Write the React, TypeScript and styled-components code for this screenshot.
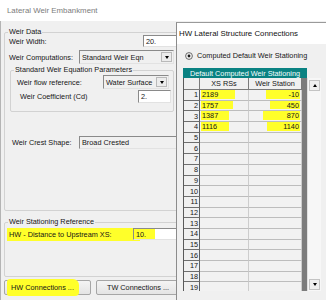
import React from "react";
import styled, { createGlobalStyle } from "styled-components";

const GlobalStyle = createGlobalStyle`
  html, body { margin: 0; padding: 0; background: #ffffff; }
  body { font-family: "Liberation Sans", Arial, sans-serif; }
`;

const Screen = styled.div`
  position: relative;
  width: 326px;
  height: 300px;
  overflow: hidden;
  background: #ffffff;
  font-size: 7.3px;
  color: #161616;
`;

const TopStrip = styled.div`
  position: absolute;
  left: 186px;
  top: 0;
  width: 140px;
  height: 1px;
  background: linear-gradient(90deg, #4a4a4a 0 8px, #2fa84a 8px 10px, #4a4a4a 10px 76px, #c020c0 76px 78px, #4a4a4a 78px);
`;

const Window = styled.div<{ $left: number; $top: number; $width: number; $front?: boolean }>`
  position: absolute;
  left: ${p => p.$left}px;
  top: ${p => p.$top}px;
  width: ${p => p.$width}px;
  bottom: 0;
  display: flex;
  flex-direction: column;
  background: #f0f0f0;
  z-index: ${p => (p.$front ? 2 : 1)};
  ${p => p.$front && `border-left: 1px solid #8c8c8c; border-top: 1px solid #9a9a9a;`}
`;

const TitleBar = styled.div<{ $active?: boolean; $indent: number }>`
  height: 21px;
  flex-shrink: 0;
  display: flex;
  align-items: center;
  padding-left: ${p => p.$indent}px;
  background: #ffffff;
  font-size: 7.85px;
  color: ${p => (p.$active ? "#111111" : "#7c7c7c")};
`;

const Client = styled.div<{ $pad: string }>`
  flex: 1;
  display: flex;
  flex-direction: column;
  padding: ${p => p.$pad};
`;

const LeftClient = styled(Client)`
  border-left: 1px solid #b4b4b4;
`;

const Group = styled.div<{ $h: number; $w: number; $ml?: number; $mt?: number }>`
  position: relative;
  box-sizing: border-box;
  height: ${p => p.$h}px;
  width: ${p => p.$w}px;
  margin-left: ${p => p.$ml ?? 0}px;
  margin-top: ${p => p.$mt ?? 0}px;
  border: 1px solid #d2d2d2;
  border-radius: 2px;
  display: flex;
  flex-direction: column;
  flex-shrink: 0;
`;

const Legend = styled.span`
  position: absolute;
  top: -6px;
  left: 3px;
  padding: 0 1px;
  line-height: 10px;
  background: #f0f0f0;
`;

const Row = styled.div<{ $h: number; $indent: number; $mt?: number }>`
  display: flex;
  align-items: center;
  height: ${p => p.$h}px;
  padding-left: ${p => p.$indent}px;
  margin-top: ${p => p.$mt ?? 0}px;
  flex-shrink: 0;
`;

const Label = styled.span<{ $w: number }>`
  width: ${p => p.$w}px;
  flex-shrink: 0;
  white-space: nowrap;
`;

const Mark = styled.span`
  background: #ffff2a;
`;

const MarkLabel = styled(Label)`
  display: flex;
  align-items: center;
  align-self: stretch;
`;

const Sunken = styled.div<{ $w: number; $white?: boolean }>`
  box-sizing: border-box;
  width: ${p => p.$w}px;
  height: 100%;
  flex-shrink: 0;
  display: flex;
  align-items: center;
  padding-left: 2px;
  background: ${p => (p.$white ? "#ffffff" : "#f0f0f0")};
  border: 1px solid;
  border-color: #8a8a8a #e2e2e2 #e2e2e2 #8a8a8a;
  white-space: nowrap;
`;

const BoxText = styled.span`
  flex: 1;
`;

const InputMark = styled.span<{ $w: number }>`
  align-self: stretch;
  display: flex;
  align-items: center;
  width: ${p => p.$w}px;
  margin-left: -2px;
  padding-left: 2px;
  background: #ffff2a;
`;

const DropButton = styled.span`
  box-sizing: border-box;
  width: 11px;
  height: 10px;
  margin-right: 1px;
  display: flex;
  align-items: center;
  justify-content: center;
  background: #ececec;
  border: 1px solid #b9b9b9;
  &::after {
    content: "";
    border-left: 2.5px solid transparent;
    border-right: 2.5px solid transparent;
    border-top: 3px solid #000;
  }
`;

const ButtonRow = styled.div`
  display: flex;
  gap: 5px;
  margin-top: 3px;
  height: 15px;
`;

const PushButton = styled.div<{ $w: number }>`
  box-sizing: border-box;
  width: ${p => p.$w}px;
  height: 15px;
  display: flex;
  align-items: center;
  justify-content: center;
  border: 1px solid #a6a6a6;
  border-radius: 2px;
  background: linear-gradient(#f4f4f4, #e4e4e4);
  white-space: nowrap;
`;

const ButtonMark = styled.span`
  display: flex;
  align-items: center;
  justify-content: center;
  width: 72px;
  height: 17px;
  margin-left: -10px;
  background: #ffff2a;
  border-radius: 3px 6px 4px 2px;
`;

const RadioRow = styled.div`
  display: flex;
  align-items: center;
  gap: 4px;
  height: 11px;
  margin-top: 6px;
  padding-left: 2px;
`;

const GridFrame = styled.div`
  display: flex;
  width: 138px;
  height: 223px;
  margin-top: 7px;
`;

const GridMain = styled.div`
  width: 124px;
  display: flex;
  flex-direction: column;
`;

const Caption = styled.div`
  height: 10px;
  flex-shrink: 0;
  display: flex;
  align-items: center;
  justify-content: center;
  background: #0a8282;
  color: #f4ffff;
  white-space: nowrap;
`;

const GridBody = styled.div`
  flex: 1;
  overflow: hidden;
  background: #7c7c7c;
  border-left: 1px solid #5a5a5a;
`;

const Table = styled.div`
  display: grid;
  width: 118px;
  grid-template-columns: 16px 49px 53px;
  grid-template-rows: 12px;
  grid-auto-rows: 10.7px;
  background: #f2f2f2;
`;

const HeadCell = styled.div`
  box-sizing: border-box;
  display: flex;
  align-items: center;
  justify-content: center;
  background: #f0f0f0;
  border-right: 1px solid #7a7a7a;
  border-bottom: 1px solid #7a7a7a;
  white-space: nowrap;
`;

const RowHead = styled.div`
  box-sizing: border-box;
  display: flex;
  align-items: center;
  justify-content: flex-end;
  padding-right: 1px;
  background: #f0f0f0;
  border-right: 1px solid #5e5e5e;
  border-bottom: 1px solid #6e6e6e;
`;

const Cell = styled.div<{ $right?: boolean }>`
  box-sizing: border-box;
  display: flex;
  align-items: stretch;
  justify-content: ${p => (p.$right ? "flex-end" : "flex-start")};
  padding: 0 1px 1px 1px;
  border-right: 1px solid #cdcdcd;
  border-bottom: 1px solid #bdbdbd;
`;

const CellMark = styled.span<{ $w: number; $right?: boolean }>`
  display: flex;
  align-items: center;
  justify-content: ${p => (p.$right ? "flex-end" : "flex-start")};
  width: ${p => p.$w}px;
  padding: 0 1px;
  background: #ffff2a;
`;

const ScrollBar = styled.div`
  width: 14px;
  display: flex;
  flex-direction: column;
  padding-top: 10px;
`;

const Track = styled.div`
  flex: 1;
  display: flex;
  flex-direction: column;
  justify-content: space-between;
  background: #f7f7f7;
  border-left: 1px solid #e0e0e0;
  padding: 2px 1px 1px 1px;
`;

const ArrowButton = styled.div<{ $up?: boolean }>`
  box-sizing: border-box;
  height: 11px;
  display: flex;
  align-items: center;
  justify-content: center;
  background: #f0f0f0;
  border: 1px solid #c4c4c4;
  &::after {
    content: "";
    border-left: 2.5px solid transparent;
    border-right: 2.5px solid transparent;
    ${p => (p.$up ? "border-bottom: 3px solid #000;" : "border-top: 3px solid #000;")}
  }
`;

const stations = [
  { xs: "2189", st: "-10", xw: 32, sw: 32 },
  { xs: "1757", st: "450", xw: 30, sw: 28 },
  { xs: "1387", st: "870", xw: 26, sw: 35 },
  { xs: "1116", st: "1140", xw: 26, sw: 31 },
];

function RadioDot() {
  return (
    <svg width="8" height="8" viewBox="0 0 8 8">
      <circle cx="4" cy="4" r="3.4" fill="#f4f4f4" stroke="#5a5a5a" strokeWidth="0.9" />
      <circle cx="4" cy="4" r="1.4" fill="#1a1a1a" />
    </svg>
  );
}

function Combo({ w, text }: { w: number; text: string }) {
  return (
    <Sunken $w={w}>
      <BoxText>{text}</BoxText>
      <DropButton />
    </Sunken>
  );
}

function LateralWeirDialog() {
  return (
    <Window $left={0} $top={0} $width={330}>
      <TitleBar $indent={7}>Lateral Weir Embankment</TitleBar>
      <LeftClient $pad="11px 0 0 3px">
        <Group $h={179} $w={260}>
          <Legend>Weir Data</Legend>
          <Row $h={12} $indent={4} $mt={2}>
            <Label $w={134}>Weir Width:</Label>
            <Sunken $w={42} $white>20.</Sunken>
          </Row>
          <Row $h={14} $indent={4} $mt={3}>
            <Label $w={70}>Weir Computations:</Label>
            <Combo w={95} text="Standard Weir Eqn" />
          </Row>
          <Group $h={42} $w={164} $ml={5} $mt={6}>
            <Legend>Standard Weir Equation Parameters</Legend>
            <Row $h={14} $indent={6} $mt={4}>
              <Label $w={86}>Weir flow reference:</Label>
              <Combo w={66} text="Water Surface" />
            </Row>
            <Row $h={13} $indent={9} $mt={1}>
              <Label $w={118}>Weir Coefficient (Cd)</Label>
              <Sunken $w={33} $white>2.</Sunken>
            </Row>
          </Group>
          <Row $h={13} $indent={7} $mt={24}>
            <Label $w={67}>Weir Crest Shape:</Label>
            <Sunken $w={110}>Broad Crested</Sunken>
          </Row>
        </Group>
        <Group $h={55} $w={260} $mt={11}>
          <Legend>Weir Stationing Reference</Legend>
          <Row $h={12} $indent={2} $mt={5}>
            <MarkLabel $w={126}>
              <Mark style={{ padding: "2px 28px 2px 2px" }}>HW - Distance to Upstream XS:</Mark>
            </MarkLabel>
            <Sunken $w={60} $white>
              <InputMark $w={19}>10.</InputMark>
            </Sunken>
          </Row>
        </Group>
        <ButtonRow>
          <PushButton $w={87}>
            <ButtonMark>HW Connections ...</ButtonMark>
          </PushButton>
          <PushButton $w={84}>TW Connections ...</PushButton>
        </ButtonRow>
      </LeftClient>
    </Window>
  );
}

function ConnectionsWindow() {
  const rows = Array.from({ length: 19 }, (_, i) => stations[i] ?? null);
  return (
    <Window $left={176} $top={22} $width={160} $front>
      <TitleBar $indent={2} $active>HW Lateral Structure Connections</TitleBar>
      <Client $pad="0 0 0 6px">
        <RadioRow>
          <RadioDot />
          <span>Computed Default Weir Stationing</span>
        </RadioRow>
        <GridFrame>
          <GridMain>
            <Caption>Default Computed Weir Stationing</Caption>
            <GridBody>
              <Table>
                <HeadCell />
                <HeadCell>XS RSs</HeadCell>
                <HeadCell>Weir Station</HeadCell>
                {rows.map((r, i) => (
                  <React.Fragment key={i}>
                    <RowHead>{i + 1}</RowHead>
                    <Cell>{r && <CellMark $w={r.xw}>{r.xs}</CellMark>}</Cell>
                    <Cell $right>{r && <CellMark $w={r.sw} $right>{r.st}</CellMark>}</Cell>
                  </React.Fragment>
                ))}
              </Table>
            </GridBody>
          </GridMain>
          <ScrollBar>
            <Track>
              <ArrowButton $up />
              <ArrowButton />
            </Track>
          </ScrollBar>
        </GridFrame>
      </Client>
    </Window>
  );
}

export default function App() {
  return (
    <>
      <GlobalStyle />
      <Screen>
        <TopStrip />
        <LateralWeirDialog />
        <ConnectionsWindow />
      </Screen>
    </>
  );
}
